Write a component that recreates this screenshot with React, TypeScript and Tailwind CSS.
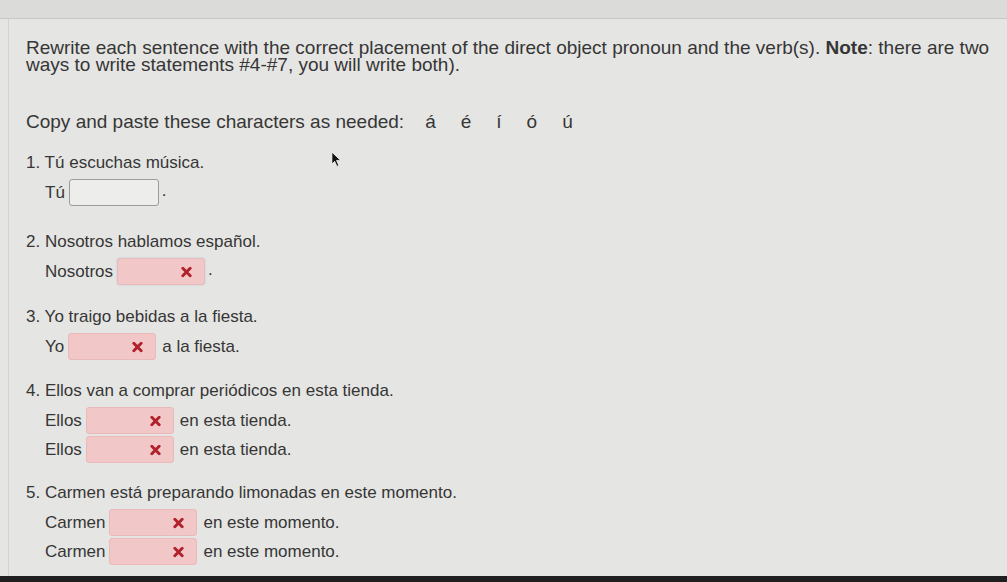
import React from 'react'

const boxCls = 'relative inline-block w-[88px] h-[27px] rounded-[3px] align-middle'
const wrongCls = `${boxCls} bg-[#f1c7c7] border border-[#eab9b9]`

function Cross() {
  return (
    <svg viewBox="0 0 12 12" className="absolute right-[12px] top-1/2 -translate-y-1/2 w-[11px] h-[11px]">
      <path d="M2 2 L10 10 M10 2 L2 10" stroke="#b0212b" strokeWidth="3.2" strokeLinecap="round" />
    </svg>
  )
}

function Row({ label, after, focus }: { label: string; after?: string; focus?: boolean }) {
  return (
    <div className="flex items-center h-[27px] ml-[19px]">
      <span>{label}</span>
      <span
        className={`${wrongCls} ml-[4px] ${focus ? 'border-[#aebfd2] shadow-[0_0_2px_#b7c7da]' : ''}`}
      >
        <Cross />
      </span>
      {after ? <span className="ml-[6px]">{after}</span> : <span className="ml-[3px] self-end mb-[3px]">.</span>}
    </div>
  )
}

function Item({ n, text, className = '', children }: { n: number; text: string; className?: string; children: React.ReactNode }) {
  return (
    <div className={className}>
      <p className="leading-[16px] h-[16px]">
        {n}. {text}
      </p>
      <div className="mt-[8px] flex flex-col gap-[2px]">{children}</div>
    </div>
  )
}

export default function App() {
  return (
    <div className="relative w-[1007px] h-[582px] overflow-hidden bg-[#e5e5e3] text-[#363636] font-['Liberation_Sans',Arial,sans-serif] text-[17px] flex flex-col">
      <div className="h-[19px] shrink-0 bg-[#dbdbd9] border-b border-[#c8c8c6]" />
      <div className="flex-1 ml-[8px] border-l border-[#d2d2d0] pl-[17px] pt-[20px]">
        <p className="text-[19px] leading-[17px] pr-[8px]">
          Rewrite each sentence with the correct placement of the direct object pronoun and the verb(s).{' '}
          <span className="font-bold">Note</span>: there are two ways to write statements #4-#7, you will write both).
        </p>

        <p className="mt-[41px] text-[19px] leading-[16px] flex">
          <span>Copy and paste these characters as needed:</span>
          <span className="ml-[21px] flex gap-[25px]">
            <span>á</span>
            <span>é</span>
            <span>í</span>
            <span>ó</span>
            <span>ú</span>
          </span>
        </p>

        <Item n={1} text="Tú escuchas música." className="mt-[25px]">
          <div className="flex items-center h-[27px] ml-[19px]">
            <span>Tú</span>
            <span className={`${boxCls} ml-[4px] w-[90px] bg-[#ededeb] border border-[#9c9c9c]`} />
            <span className="ml-[3px] self-end mb-[3px]">.</span>
          </div>
        </Item>

        <Item n={2} text="Nosotros hablamos español." className="mt-[28px]">
          <Row label="Nosotros" focus />
        </Item>

        <Item n={3} text="Yo traigo bebidas a la fiesta." className="mt-[24px]">
          <Row label="Yo" after="a la fiesta." />
        </Item>

        <Item n={4} text="Ellos van a comprar periódicos en esta tienda." className="mt-[23px]">
          <Row label="Ellos" after="en esta tienda." />
          <Row label="Ellos" after="en esta tienda." />
        </Item>

        <Item n={5} text="Carmen está preparando limonadas en este momento." className="mt-[22px]">
          <Row label="Carmen" after="en este momento." />
          <Row label="Carmen" after="en este momento." />
        </Item>
      </div>
      <div className="h-[6px] shrink-0 bg-[#1f1f1f]" />

      <svg viewBox="0 0 12 18" className="absolute left-[331px] top-[151px] w-[11px] h-[17px]">
        <path d="M1 1 L1 14 L4 11 L6.5 16.5 L8.5 15.5 L6 10 L10.5 10 Z" fill="#111" stroke="#fff" strokeWidth="0.8" />
      </svg>
    </div>
  )
}
